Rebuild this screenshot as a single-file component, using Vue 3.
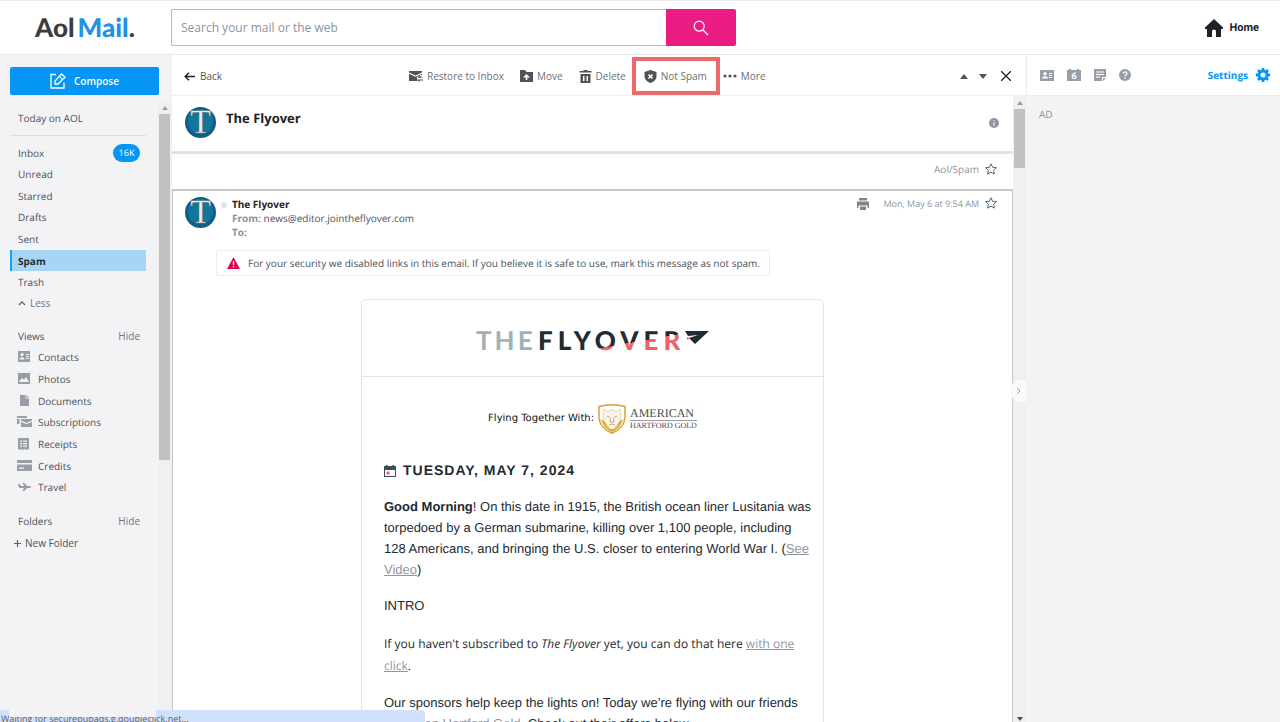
<template>
    <div class="app-shell">
        <header class="top-bar">
            <a href="#" class="logo"
                ><span class="logo-aol">Aol</span
                ><span class="logo-mail">Mail</span
                ><span class="logo-dot">.</span></a
            >
            <form class="search" @submit.prevent>
                <input
                    v-model="query"
                    type="text"
                    aria-label="Search"
                    placeholder="Search your mail or the web"
                />
                <button type="submit" aria-label="Search">
                    <svg width="16" height="16" viewBox="0 0 16 16">
                        <circle cx="6.2" cy="6.2" r="5" />
                        <path d="M10 10l5 5" />
                    </svg>
                </button>
            </form>
            <a href="#" class="home-link">
                <svg width="18" height="18" viewBox="0 0 18 18">
                    <path
                        d="M9 0L0 8.6V10h2v8h5v-5.5a2 2 0 0 1 4 0V18h5v-8h2V8.6z"
                    />
                </svg>
                <span>Home</span>
            </a>
        </header>

        <div class="columns">
            <nav class="sidebar">
                <button type="button" class="compose">
                    <svg width="16" height="16" viewBox="0 0 16 16">
                        <path d="M6 1.5H1v13.5h13V9.5" />
                        <path d="M5 11V8l6.5-7L15 4.2 8 11z" />
                        <path d="M9.5 3.5l3 3" />
                    </svg>
                    Compose
                </button>
                <div class="side-body">
                    <div class="side-list">
                        <a href="#" class="today">Today on AOL</a>
                        <div class="mailboxes">
                            <a
                                v-for="box in mailboxes"
                                :key="box.name"
                                href="#"
                                class="mailbox"
                                :class="{ active: box.name === current }"
                                @click.prevent="current = box.name"
                            >
                                {{ box.name }}
                                <span v-if="box.count" class="badge">{{
                                    box.count
                                }}</span>
                            </a>
                        </div>
                        <button type="button" class="less">
                            <svg width="8" height="6" viewBox="0 0 8 6">
                                <path d="M1 5l3-3.2L7 5" />
                            </svg>
                            Less
                        </button>
                        <div class="views">
                            <div class="section-head">
                                <span>Views</span>
                                <button type="button">Hide</button>
                            </div>
                            <a
                                v-for="view in views"
                                :key="view.name"
                                href="#"
                                class="view"
                            >
                                <svg width="16" height="14" viewBox="0 0 16 14">
                                    <path :d="view.icon" fill-rule="evenodd" />
                                </svg>
                                {{ view.name }}
                            </a>
                        </div>
                        <div class="folders">
                            <div class="section-head">
                                <span>Folders</span>
                                <button type="button">Hide</button>
                            </div>
                            <button type="button" class="new-folder">
                                <svg width="7" height="7" viewBox="0 0 7 7">
                                    <path d="M3.5 0v7M0 3.5h7" />
                                </svg>
                                New Folder
                            </button>
                        </div>
                    </div>
                    <div class="scrollbar side-scroll">
                        <i class="arrow-up"></i>
                        <span class="thumb"></span>
                    </div>
                </div>
            </nav>

            <main class="reader">
                <div class="toolbar">
                    <button type="button" class="back">
                        <svg width="11" height="9" viewBox="0 0 11 9">
                            <path d="M11 4.5H1.2M5 .7L1.2 4.5 5 8.3" />
                        </svg>
                        Back
                    </button>
                    <div class="actions">
                        <button type="button">
                            <svg width="14" height="12" viewBox="0 0 14 12">
                                <path
                                    d="M0 1h13v1.500L6.500 5.500 0 2.500zM0 3.700l6.500 3L13 3.700V5.500L11 4.500V6.500H8V11H0z"
                                />
                                <path
                                    d="M10 5.500l4 2.300H8.800v-1h1.200zM10.500 12L7 9.600h7v1h-3.500z"
                                />
                            </svg>
                            Restore to Inbox
                        </button>
                        <button type="button">
                            <svg width="13" height="12" viewBox="0 0 13 12">
                                <path
                                    fill-rule="evenodd"
                                    d="M0 0h5l1.500 2H13v10H0zM6.500 4L3 7.500h2.700V10h1.600V7.500h2.700z"
                                />
                            </svg>
                            Move
                        </button>
                        <button type="button">
                            <svg width="13" height="13" viewBox="0 0 12 13">
                                <path
                                    fill-rule="evenodd"
                                    d="M4 0h4v1h4v1.500H0V1h4zM1 4h10v9H1zM3.500 6v5H5V6zM7 6v5h1.500V6z"
                                />
                            </svg>
                            Delete
                        </button>
                        <button type="button" class="not-spam">
                            <svg width="13" height="13" viewBox="0 0 12 13">
                                <path
                                    d="M6 0l6 2v4.500c0 3-2.800 5.300-6 6.500-3.200-1.200-6-3.500-6-6.500V2z"
                                />
                                <path
                                    d="M4 4.500l4 4M8 4.500l-4 4"
                                    stroke="#fff"
                                    stroke-width="1.6"
                                />
                            </svg>
                            Not Spam
                        </button>
                        <button type="button" class="more">
                            <svg width="14" height="4" viewBox="0 0 14 4">
                                <circle cx="2" cy="2" r="1.6" />
                                <circle cx="7" cy="2" r="1.6" />
                                <circle cx="12" cy="2" r="1.6" />
                            </svg>
                            More
                        </button>
                    </div>
                    <div class="pager">
                        <button type="button" aria-label="Previous">
                            <svg width="8" height="5" viewBox="0 0 8 5">
                                <path d="M4 0l4 5H0z" />
                            </svg>
                        </button>
                        <button type="button" aria-label="Next">
                            <svg width="8" height="5" viewBox="0 0 8 5">
                                <path d="M4 5L0 0h8z" />
                            </svg>
                        </button>
                        <button type="button" aria-label="Close" class="close">
                            <svg width="10" height="10" viewBox="0 0 10 10">
                                <path d="M0 0l10 10M10 0L0 10" />
                            </svg>
                        </button>
                    </div>
                </div>

                <div class="reader-body">
                    <div class="thread">
                        <div class="subject">
                            <svg class="avatar" viewBox="0 0 32 32">
                                <circle cx="16" cy="16" r="16" fill="#0d5f85" />
                                <circle cx="16" cy="15" r="13" fill="#14759a" />
                                <text x="16" y="27">T</text>
                            </svg>
                            <h1>The Flyover</h1>
                            <svg
                                class="info"
                                width="10"
                                height="10"
                                viewBox="0 0 10 10"
                            >
                                <circle cx="5" cy="5" r="5" />
                                <path d="M5 2v1.200M5 4.300V8" />
                            </svg>
                        </div>
                        <div class="location">
                            <span>Aol/Spam</span>
                            <svg
                                class="star"
                                width="12"
                                height="12"
                                viewBox="0 0 12 12"
                            >
                                <path :d="starPath" />
                            </svg>
                        </div>
                        <article class="message">
                            <div class="message-head">
                                <svg class="avatar" viewBox="0 0 32 32">
                                    <circle cx="16" cy="16" r="16" fill="#0d5f85" />
                                    <circle cx="16" cy="15" r="13" fill="#14759a" />
                                    <text x="16" y="27">T</text>
                                </svg>
                                <i class="unread-dot"></i>
                                <div class="sender">
                                    <strong>The Flyover</strong>
                                    <div>
                                        <b>From:</b>
                                        news@editor.jointheflyover.com
                                    </div>
                                    <div><b>To:</b></div>
                                </div>
                                <div class="meta">
                                    <svg width="12" height="12" viewBox="0 0 12 12">
                                        <path
                                            d="M2 0h8v2.500H2zM0 3.500h12V10h-1.500V7.500h-9V10H0zM3 8.500h6V12H3z"
                                        />
                                    </svg>
                                    <time>Mon, May 6 at 9:54 AM</time>
                                    <svg
                                        class="star"
                                        width="12"
                                        height="12"
                                        viewBox="0 0 12 12"
                                    >
                                        <path :d="starPath" />
                                    </svg>
                                </div>
                            </div>
                            <p class="warning">
                                <svg width="13" height="12" viewBox="0 0 13 12">
                                    <path d="M6.5 0L13 12H0z" fill="#e3004f" />
                                    <path
                                        d="M6.5 4v4M6.5 9v1.500"
                                        stroke="#fff"
                                        stroke-width="1.3"
                                    />
                                </svg>
                                For your security we disabled links in this
                                email. If you believe it is safe to use, mark
                                this message as not spam.
                            </p>

                            <div class="card">
                                <div class="card-logo">
                                    <svg width="234" height="28" viewBox="0 0 234 28">
                                        <defs>
                                            <linearGradient
                                                id="flyover"
                                                gradientUnits="userSpaceOnUse"
                                                x1="165"
                                                y1="12"
                                                x2="170"
                                                y2="40"
                                            >
                                                <stop offset="0.1" stop-color="#222b31" />
                                                <stop offset="0.1" stop-color="#f0616a" />
                                            </linearGradient>
                                        </defs>
                                        <text x="0" y="24" class="fly-the">THE</text>
                                        <text
                                            x="62"
                                            y="24"
                                            class="fly-name"
                                            fill="url(#flyover)"
                                        >FLYOVER</text>
                                        <path
                                            d="M209 5h24l-14 13-6-6 9-3-10 1z"
                                            fill="#222b31"
                                        />
                                        <path d="M211 11l3 1-3 2z" fill="#f0616a" />
                                    </svg>
                                </div>
                                <div class="card-body">
                                    <div class="sponsor">
                                        <span>Flying Together With:</span>
                                        <svg width="28" height="30" viewBox="0 0 28 30">
                                            <path
                                                d="M1 2.500Q14-1 27 2.500V14q-1 10-13 15.300Q2 24 1 14z"
                                                fill="#fff"
                                                stroke="#d3a52e"
                                                stroke-width="1.5"
                                            />
                                            <path
                                                d="M6 5l4 3 2-2h4l2 2 4-3 1 7-2 7-7 7-7-7-2-7z"
                                                fill="#faf5e8"
                                                stroke="#e0c682"
                                                stroke-width="0.7"
                                            />
                                            <path
                                                d="M3 15q2 9 11 13 9-4 11-13-4 2-6 7l-3 3h-4l-3-3Q7 17 3 15z"
                                                fill="#d8ae3c"
                                            />
                                            <path
                                                d="M9 12l3 1.500M19 12l-3 1.500M12.500 14l-.5 4h4l-.5-4M11 21q3-2 6 0"
                                                fill="none"
                                                stroke="#b59a62"
                                                stroke-width="0.8"
                                            />
                                        </svg>
                                        <div class="ahg">
                                            <span class="ahg-top">AMERICAN</span>
                                            <span class="ahg-sub">HARTFORD GOLD</span>
                                        </div>
                                    </div>
                                    <h2>
                                        <svg width="12" height="12" viewBox="0 0 12 12">
                                            <path
                                                fill-rule="evenodd"
                                                fill="#3c4c55"
                                                d="M0 1h2V0h1.500v1h5V0H10v1h2v11H0zM1 5v6h10V5z"
                                            />
                                            <path
                                                d="M2.500 6.500h3v3h-3z"
                                                fill="#f0616a"
                                            />
                                        </svg>
                                        TUESDAY, MAY 7, 2024
                                    </h2>
                                    <p>
                                        <b>Good Morning</b>! On this date in
                                        1915, the British ocean liner Lusitania
                                        was<br />torpedoed by a German
                                        submarine, killing over 1,100 people,
                                        including<br />128 Americans, and
                                        bringing the U.S. closer to entering
                                        World War I. (<a href="#"
                                            >See<br />Video</a
                                        >)
                                    </p>
                                    <p>INTRO</p>
                                    <p class="subscribe">
                                        If you haven't subscribed to
                                        <em>The Flyover</em> yet, you can do
                                        that here
                                        <a href="#">with one<br />click</a>.
                                    </p>
                                    <p>
                                        Our sponsors help keep the lights on!
                                        Today we’re flying with our friends<br />
                                        <a href="#">American Hartford Gold</a>.
                                        Check out their offers below.
                                    </p>
                                </div>
                            </div>
                        </article>
                    </div>
                    <div class="scrollbar reader-scroll">
                        <i class="arrow-up"></i>
                        <span class="thumb"></span>
                        <i class="arrow-down"></i>
                    </div>
                    <button type="button" class="collapse" aria-label="Collapse">
                        <svg width="5" height="8" viewBox="0 0 5 8">
                            <path d="M1 1l3 3-3 3" />
                        </svg>
                    </button>
                </div>
            </main>

            <aside class="rail">
                <div class="rail-bar">
                    <svg width="14" height="12" viewBox="0 0 14 12">
                        <path
                            fill-rule="evenodd"
                            d="M0 1h14v11H0zM5 3a1.700 1.700 0 1 0 .1 0zM2 9.500h6c0-3-6-3-6 0zM9 4v1h3V4zM9 6v1h3V6zM9 8v1h3V8z"
                        />
                    </svg>
                    <svg width="14" height="12" viewBox="0 0 14 12">
                        <path d="M0 1h2V0h2v1h6V0h2v1h2v11H0z" />
                        <text x="7" y="10">6</text>
                    </svg>
                    <svg width="12" height="12" viewBox="0 0 12 12">
                        <path
                            fill-rule="evenodd"
                            d="M0 0h12v8H8v4H0zM2 2.500v1h8v-1zM2 5v1h8V5zM2 7.500v1h4v-1zM9 9h3l-3 3z"
                        />
                    </svg>
                    <svg width="12" height="12" viewBox="0 0 12 12">
                        <circle cx="6" cy="6" r="6" />
                        <path
                            d="M4.200 4.800c0-2.500 3.700-2.400 3.700-.2C7.900 6 6 5.900 6 7.400M6 8.400v1.300"
                            fill="none"
                            stroke="#fff"
                            stroke-width="1.3"
                        />
                    </svg>
                    <a href="#" class="settings">
                        Settings
                        <svg width="14" height="14" viewBox="0 0 14 14">
                            <circle cx="7" cy="7" r="4" />
                            <path
                                d="M7 0v2.500M7 11.500V14M0 7h2.500M11.500 7H14M2 2l2 2M10 10l2 2M12 2l-2 2M4 10l-2 2"
                            />
                        </svg>
                    </a>
                </div>
                <span class="ad">AD</span>
            </aside>
        </div>

        <!-- 浏览器加载状态条 -->
        <div class="status">
            <i class="status-cover"></i>
            <span>Waiting for securepubads.g.doubleclick.net...</span>
        </div>
    </div>
</template>

<script setup>
import { ref } from "vue";

const query = ref("");
const current = ref("Spam");

const mailboxes = [
    { name: "Inbox", count: "16K" },
    { name: "Unread" },
    { name: "Starred" },
    { name: "Drafts" },
    { name: "Sent" },
    { name: "Spam" },
    { name: "Trash" },
];

const views = [
    {
        name: "Contacts",
        icon: "M2 1h12v11H2zM6 3a1.600 1.600 0 1 0 .1 0zM3.500 9.500h5c0-3-5-3-5 0zM10 4v1h3V4zM10 6v1h3V6zM10 8v1h3V8z",
    },
    {
        name: "Photos",
        icon: "M2 1h12v11H2zM3 10h10l-3-5-2 3-2-2z",
    },
    {
        name: "Documents",
        icon: "M4 1h5.500v3.500H13V12H4zM10.300 1L13 3.700h-2.700z",
    },
    {
        name: "Subscriptions",
        icon: "M1 1h10v2H1zM1 4h2.500v5H1zM5 4h11v1.500l-5.500 2.500L5 5.500zM5 6.800l5.500 2.500L16 6.800V12H5z",
    },
    {
        name: "Receipts",
        icon: "M2 1h11v12l-1.500-1L10 13l-1.500-1L7 13l-1.500-1L4 13l-2-1zM4 3.500v1.200h2V3.500zM7 3.500v1.200h4V3.500zM4 6v1.200h2V6zM7 6v1.200h4V6zM4 8.500v1.200h2V8.500zM7 8.500v1.200h4V8.500z",
    },
    {
        name: "Credits",
        icon: "M1 1h15v3H1zM1 5.500h15V12H1zM3 8.500v1.200h5V8.500z",
    },
    {
        name: "Travel",
        icon: "M2 4h1.500L5 6h3L6.500 3H8l3.500 3H14q2 1 0 2h-2.500L8 11H6.500L8 8H4Q2 7 2 4z",
    },
];

const starPath =
    "M6 .8l1.600 3.500 3.800.4-2.800 2.600.8 3.800L6 9.200l-3.400 1.900.8-3.800L.6 4.700l3.800-.4z";
</script>

<style>
body {
    overflow: hidden;
}
</style>

<style scoped>
.app-shell {
    display: flex;
    flex-direction: column;
    height: 100vh;
    overflow: hidden;
    position: relative;
    box-sizing: border-box;
    border-top: 1px solid #ececee;
    background: #fff;
    color: #4d525a;
    font-family: "Open Sans", "Noto Sans", sans-serif;
    font-size: 10px;
    line-height: 14px;
    text-rendering: geometricPrecision;
}

a {
    color: inherit;
    text-decoration: none;
}

button {
    padding: 0;
    border: 0;
    background: none;
    color: inherit;
    font: inherit;
    cursor: pointer;
}

svg {
    display: block;
    flex: none;
}

/* 顶部栏 */
.top-bar {
    display: flex;
    align-items: center;
    flex: none;
    height: 53px;
    border-bottom: 1px solid #e8e9ed;
}

.logo {
    display: flex;
    align-items: baseline;
    flex: none;
    box-sizing: border-box;
    width: 171px;
    padding: 0 0 2px 35px;
    font-family: Lato, sans-serif;
    font-size: 26px;
    font-weight: 900;
    line-height: 32px;
}

.logo-aol,
.logo-dot {
    color: #3d3d3f;
}

.logo-mail {
    margin-left: 3px;
    color: #2492e4;
}

.search {
    display: flex;
    width: 565px;
    height: 37px;
}

.search input {
    flex: 1;
    min-width: 0;
    padding: 0 9px;
    border: 1px solid #b8babf;
    border-right: 0;
    border-radius: 2px 0 0 2px;
    outline: none;
    font: inherit;
    font-size: 12px;
}

.search input::placeholder {
    color: #8c949c;
    opacity: 1;
}

.search button {
    display: flex;
    align-items: center;
    justify-content: center;
    width: 70px;
    border-radius: 0 2px 2px 0;
    background: #eb1c82;
}

.search svg {
    fill: none;
    stroke: #fff;
    stroke-width: 1.3;
}

.home-link {
    display: flex;
    align-items: center;
    gap: 7px;
    margin-left: auto;
    margin-right: 21px;
    color: #1d2228;
    font-family: Roboto, sans-serif;
    font-size: 11px;
    font-weight: 700;
}

.home-link svg {
    fill: #1d2228;
}

.columns {
    display: flex;
    flex: 1;
    min-height: 0;
}

/* 左侧栏 */
.sidebar {
    display: flex;
    flex-direction: column;
    flex: none;
    width: 172px;
    background: #f3f3f6;
}

.compose {
    display: flex;
    align-items: center;
    justify-content: center;
    gap: 8px;
    flex: none;
    height: 28px;
    margin: 12px 13px 6px 10px;
    border-radius: 2px;
    background: #0595f5;
    color: #fff;
    font-weight: 600;
}

.compose svg {
    fill: none;
    stroke: #fff;
    stroke-width: 1.3;
}

.side-body {
    display: flex;
    flex: 1;
    min-height: 0;
}

.side-list {
    flex: 1;
    padding: 0 12px 0 10px;
}

.today {
    display: block;
    height: 24px;
    padding: 10px 8px 0;
    border-bottom: 1px solid #dcdee4;
}

.mailboxes {
    display: grid;
    grid-auto-rows: 1fr;
    height: 151px;
    margin-top: 6px;
}

.mailbox {
    display: flex;
    align-items: center;
    justify-content: space-between;
    padding: 0 6px 0 8px;
}

.mailbox.active {
    padding-left: 6px;
    border-left: 2px solid #18a0f5;
    background: #a6d6f6;
    color: #232a31;
    font-weight: 700;
}

.badge {
    width: 27px;
    border-radius: 9px;
    background: #0595f5;
    color: #fff;
    font-size: 9px;
    line-height: 18px;
    text-align: center;
}

.less {
    display: flex;
    align-items: center;
    gap: 4px;
    height: 20px;
    margin-left: 8px;
    color: #6e7780;
}

.less svg,
.new-folder svg {
    fill: none;
    stroke: #5b636a;
    stroke-width: 1.2;
}

.views {
    display: grid;
    grid-auto-rows: 1fr;
    height: 173px;
    margin-top: 12px;
}

.folders {
    display: grid;
    grid-auto-rows: 1fr;
    height: 44px;
    margin-top: 12px;
}

.section-head {
    display: flex;
    align-items: center;
    justify-content: space-between;
    padding: 0 6px 0 8px;
}

.section-head button {
    color: #6e7780;
}

.view {
    display: flex;
    align-items: center;
    gap: 6px;
    padding-left: 6px;
}

.view svg {
    fill: #979ea8;
}

.new-folder {
    display: flex;
    align-items: center;
    gap: 4px;
    padding-left: 4px;
}

/* 滚动条 */
.scrollbar {
    display: flex;
    flex-direction: column;
    align-items: center;
    flex: none;
    box-sizing: border-box;
    width: 14px;
    background: #f0f0f1;
}

.side-scroll {
    align-items: flex-start;
    padding-left: 1px;
}

.thumb {
    width: 11px;
    background: #c1c1c1;
}

.side-scroll .thumb {
    height: 346px;
}

.reader-scroll {
    width: 13px;
}

.reader-scroll .thumb {
    height: 59px;
}

.arrow-up,
.arrow-down {
    flex: none;
    margin: 5px 0 4px;
    border: 3px solid transparent;
    border-top: 0;
    border-bottom: 4px solid #9a9a9a;
}

.side-scroll .arrow-up {
    margin-left: 3px;
}

.arrow-down {
    margin: auto 0 1px;
    border-top: 4px solid #505050;
    border-bottom: 0;
}

/* 阅读区 */
.reader {
    display: flex;
    flex-direction: column;
    flex: 1;
    min-width: 0;
}

.toolbar {
    display: flex;
    align-items: center;
    flex: none;
    box-sizing: border-box;
    height: 41px;
    padding: 2px 15px 0 12px;
    border-bottom: 1px solid #f0f0f3;
    color: #6c7075;
}

.toolbar button {
    display: flex;
    align-items: center;
    gap: 4px;
    white-space: nowrap;
}

.toolbar svg {
    fill: #505357;
}

.toolbar .back {
    gap: 5px;
    width: 225px;
    color: #4d525a;
}

.back svg {
    fill: none;
    stroke: #1d2228;
    stroke-width: 1.5;
}

.actions {
    display: flex;
    align-items: center;
    gap: 16px;
}

.toolbar .not-spam {
    height: 38px;
    margin: 0 -13px 0 -10px;
    padding: 0 9px 0 8px;
    border: 4px solid #ee6a6a;
    border-radius: 1px;
}

.pager {
    display: flex;
    align-items: center;
    gap: 11px;
    margin-left: auto;
}

.toolbar .close {
    margin-left: 3px;
}

.close svg {
    stroke: #1d2228;
    stroke-width: 1.3;
}

.reader-body {
    display: flex;
    flex: 1;
    min-height: 0;
    position: relative;
    overflow: hidden;
}

.thread {
    display: flex;
    flex-direction: column;
    flex: 1;
    min-width: 0;
    overflow: hidden;
}

.subject {
    display: flex;
    flex: none;
    height: 44px;
    padding: 11px 14px 0 13px;
    border-bottom: 3px solid #e1e3ea;
}

.avatar {
    width: 31px;
    height: 31px;
    overflow: visible;
}

.avatar text {
    fill: #efebe2;
    stroke: #5a6a70;
    stroke-width: 0.3;
    font-family: "Liberation Serif", serif;
    font-size: 35px;
    text-anchor: middle;
}

h1 {
    margin: 2px 0 0 10px;
    color: #1d2228;
    font-size: 13px;
    font-weight: 700;
    line-height: 18px;
}

.info {
    margin: 11px 0 0 auto;
    fill: #8f96a1;
    stroke: #fff;
}

.info circle {
    stroke: none;
}

.location {
    display: flex;
    align-items: center;
    justify-content: flex-end;
    gap: 6px;
    flex: none;
    height: 35px;
    box-sizing: border-box;
    padding: 0 16px 6px 0;
    color: #8c949c;
}

.star {
    fill: none;
    stroke: #5b636a;
}

.message {
    flex: 1;
    border: 1px solid #c3c7cf;
    border-top-width: 2px;
    border-bottom: 0;
}

.message-head {
    display: flex;
    padding: 6px 15px 0 12px;
}

.unread-dot {
    width: 6px;
    height: 6px;
    margin: 5px 5px 0;
    border-radius: 50%;
    background: #e0e4e9;
}

.sender strong {
    color: #1d2228;
}

.sender b,
.meta time {
    color: #8c949c;
}

.meta {
    display: flex;
    align-items: flex-start;
    gap: 6px;
    margin-left: auto;
}

.meta svg {
    margin-top: 1px;
    fill: #82868b;
}

.meta .star {
    margin-top: 0;
    fill: none;
}

.meta time {
    margin-left: 8px;
    font-size: 9px;
}

.warning {
    display: flex;
    align-items: center;
    gap: 8px;
    box-sizing: border-box;
    width: fit-content;
    height: 26px;
    margin: 11px 0 0 43px;
    padding: 0 9px 0 10px;
    border: 1px solid #ededf1;
    border-radius: 2px;
}

.card {
    width: 461px;
    margin: 23px auto 0;
    border: 1px solid #e2e4ea;
    border-radius: 5px;
    color: #232a31;
    font-family: "Liberation Sans", Arial, sans-serif;
}

.card-logo {
    display: flex;
    justify-content: center;
    height: 50px;
    padding-top: 26px;
    border-bottom: 1px solid #e2e4ea;
}

.card-logo svg {
    overflow: visible;
}

.fly-the,
.fly-name {
    font-family: Lato, sans-serif;
    font-size: 26px;
    font-weight: 700;
    letter-spacing: 3px;
}

.fly-the {
    fill: #a0b1ba;
}

.fly-name {
    font-weight: 900;
    letter-spacing: 5px;
}

.card-body {
    padding: 26px 0 26px 22px;
}

.sponsor {
    display: flex;
    align-items: center;
    justify-content: center;
    height: 32px;
    margin: 0 22px 25px 0;
    gap: 4px;
    color: #111;
    font-family: "DejaVu Sans", sans-serif;
}

.ahg {
    display: flex;
    flex-direction: column;
    font-family: "Liberation Serif", serif;
    color: #4b4b4d;
}

.ahg-top {
    border-bottom: 1px solid #9b9b9d;
    font-size: 12px;
    line-height: 13px;
}

.ahg-sub {
    font-size: 8px;
    line-height: 10px;
}

h2 {
    display: flex;
    align-items: center;
    gap: 7px;
    margin: 0 0 15px;
    font-size: 14px;
    line-height: 21px;
    letter-spacing: 1px;
}

.card-body p {
    margin: 0 0 15px;
    font-size: 13px;
    line-height: 21px;
}

.card-body .subscribe {
    margin-top: 17px;
    font-family: "Open Sans", "Noto Sans", sans-serif;
    font-size: 12px;
    line-height: 22px;
}

.card-body a {
    color: #8f96a1;
    text-decoration: underline;
}

.collapse {
    display: flex;
    align-items: center;
    justify-content: center;
    position: absolute;
    top: 50%;
    right: 0;
    width: 16px;
    height: 22px;
    margin-top: -29px;
    border-radius: 11px 0 0 11px;
    background: #fafafa;
}

.collapse svg {
    fill: none;
    stroke: #9a9a9a;
}

/* 右侧栏 */
.rail {
    flex: none;
    width: 254px;
    background: #f3f3f6;
}

.rail-bar {
    display: flex;
    align-items: center;
    gap: 13px;
    box-sizing: border-box;
    height: 41px;
    padding: 0 10px 0 13px;
    border-bottom: 1px solid #ebebef;
    border-left: 1px solid #ebebef;
    background: #fff;
}

.rail-bar svg {
    fill: #979ea8;
}

.rail-bar text {
    fill: #fff;
    font-size: 9px;
    font-weight: 700;
    text-anchor: middle;
}

.settings {
    display: flex;
    align-items: center;
    gap: 8px;
    margin-left: auto;
    color: #0595f5;
    font-weight: 700;
}

.rail-bar .settings svg {
    fill: none;
    stroke: #0595f5;
    stroke-width: 2.8;
}

.ad {
    display: block;
    margin: 11px 0 0 13px;
    color: #8c949c;
}

/* 状态条 */
.status {
    position: absolute;
    left: 0;
    bottom: 0;
    width: 425px;
    height: 12px;
    overflow: hidden;
    border-radius: 0 4px 0 0;
    background: #d2e1fb;
}

.status span {
    position: absolute;
    left: 1px;
    top: 2px;
    color: #5a6068;
    font-size: 9px;
    line-height: 14px;
}

.status-cover {
    position: absolute;
    z-index: 1;
    left: 9px;
    top: 0;
    width: 147px;
    height: 7px;
    background: #f3f3f6;
}
</style>
